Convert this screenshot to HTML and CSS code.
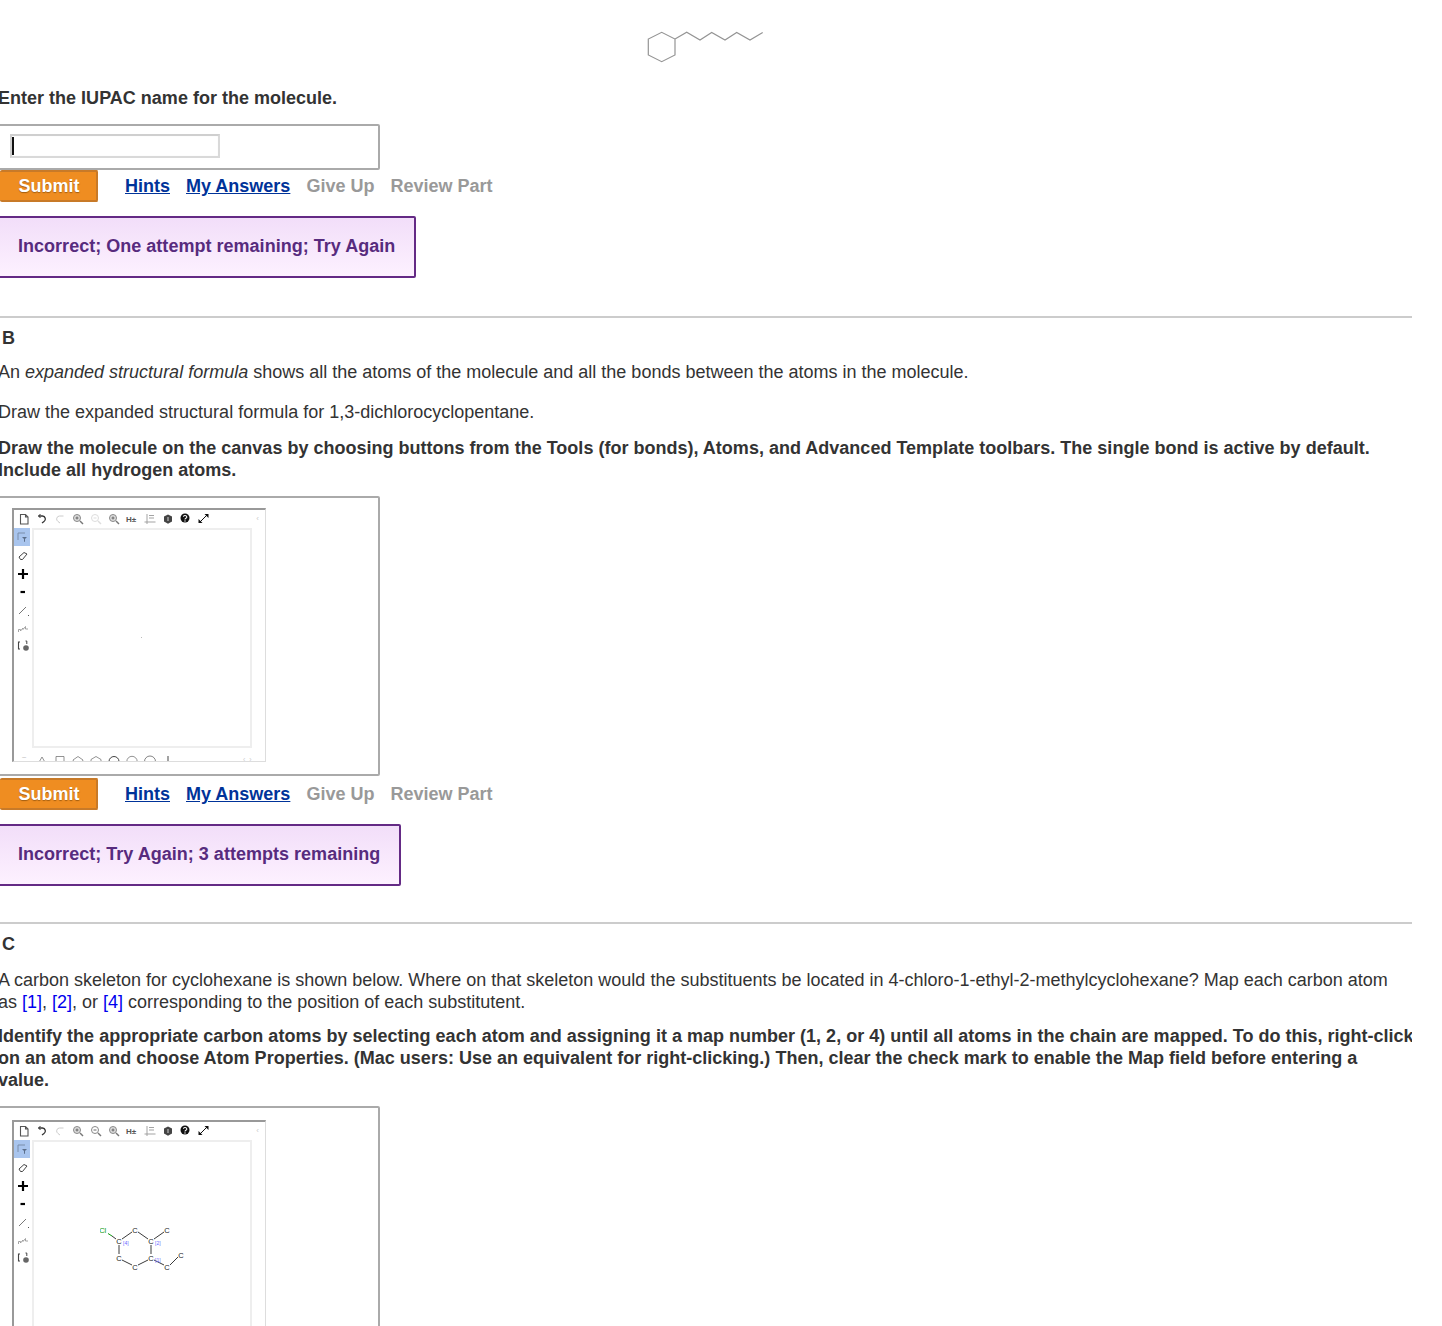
FILE: index.html
```html
<!DOCTYPE html>
<html lang="en">
<head>
<meta charset="utf-8">
<title>Naming molecules</title>
<link rel="stylesheet" href="styles.css">
</head>
<body>
<svg class="sprite" width="0" height="0" aria-hidden="true">
  <symbol id="i-new" viewBox="0 0 14 14"><path d="M3.500 2.500h5l2.500 2.500v7h-7.500z M8.500 2.500v2.500h2.500" fill="none" stroke="#555" stroke-width="1.100"/></symbol>
  <symbol id="i-undo" viewBox="0 0 14 14"><path d="M3.500 4h4a3 3 0 0 1 1.500 5.500l-2 1.500" fill="none" stroke="#333" stroke-width="1.300"/><path d="M5.500 2 3.500 4l2 2" fill="none" stroke="#333" stroke-width="1"/></symbol>
  <symbol id="i-redo" viewBox="0 0 14 14"><path d="M10.500 4H6.500a3 3 0 0 0-1.500 5.500l2 1.500" fill="none" stroke="#ccc" stroke-width="1"/></symbol>
  <symbol id="i-zin" viewBox="0 0 14 14"><circle cx="6" cy="6" r="3.500" fill="#ddd" stroke="#888"/><path d="M4.500 6h3M6 4.500v3" stroke="#666"/><path d="m9 9 3 3" stroke="#777" stroke-width="1.400"/></symbol>
  <symbol id="i-zout" viewBox="0 0 14 14"><circle cx="6" cy="6" r="3.500" fill="#fff" stroke="#888"/><path d="M4.500 6h3" stroke="#666"/><path d="m9 9 3 3" stroke="#777" stroke-width="1.400"/></symbol>
  <symbol id="i-zout-off" viewBox="0 0 14 14"><circle cx="6" cy="6" r="3.500" fill="#fff" stroke="#ddd"/><path d="M4.500 6h3" stroke="#ddd"/><path d="m9 9 3 3" stroke="#ddd" stroke-width="1.400"/></symbol>
  <symbol id="i-hs" viewBox="0 0 14 14"><text x="1" y="9.500" class="hs-text">H±</text></symbol>
  <symbol id="i-2d" viewBox="0 0 14 14"><path d="M4 2v10M1.500 10h11M6 3.500h5M6 6h5" stroke="#999" fill="none" stroke-width=".9"/></symbol>
  <symbol id="i-info" viewBox="0 0 14 14"><path d="M7 2.500 11 4.500v5l-4 2.200-4-2.200v-5z" fill="#444"/><path d="M7 5v4" stroke="#bbb" stroke-width="1.200"/></symbol>
  <symbol id="i-help" viewBox="0 0 14 14"><circle cx="6" cy="6" r="4.500" fill="#111"/><path d="M4.400 4.800a1.700 1.500 0 1 1 2.400 1.500c-.6.300-.8.600-.8 1.200" fill="none" stroke="#fff" stroke-width="1.100"/><circle cx="6" cy="9" r=".7" fill="#fff"/></symbol>
  <symbol id="i-expand" viewBox="0 0 14 14"><path d="m3 10 7-7" stroke="#111"/><path d="M7.500 2h4v4zM1.500 7v4h4z" fill="#111"/></symbol>
  <symbol id="i-select" viewBox="0 0 14 14"><path d="M3 10V3h7" fill="none" stroke="#7b8eaa" stroke-width="1"/><path d="M7 7h5l-2 2v2.500l-1 .500V9z" fill="#5c6f8a"/></symbol>
  <symbol id="i-erase" viewBox="0 0 14 14"><path d="m3 8 5-4.500 3 1.500-4.500 5.500H4.500z" fill="#fff" stroke="#444"/></symbol>
  <symbol id="i-plus" viewBox="0 0 14 14"><path d="M7 2v10M2 7h10" stroke="#000" stroke-width="2.200"/></symbol>
  <symbol id="i-minus" viewBox="0 0 14 14"><path d="M4.500 7h4.500" stroke="#000" stroke-width="2.200"/></symbol>
  <symbol id="i-bond" viewBox="0 0 14 14"><path d="m3 11 7-7" stroke="#777"/><path d="M12 12h1v1h-1z" fill="#555"/></symbol>
  <symbol id="i-chain" viewBox="0 0 14 14"><path d="M2.500 11V8.500h2V10l2.500-3v1.500L9.500 5.500V8H12" stroke="#999" fill="none" stroke-width=".9"/></symbol>
  <symbol id="i-bracket" viewBox="0 0 14 14"><path d="M4 3H2.500v7H4" fill="none" stroke="#444" stroke-width="1.100"/><path d="M9.500 2h1.300v3" fill="none" stroke="#444"/><circle cx="10" cy="9" r="2.800" fill="#666"/></symbol>
  <symbol id="r-3" viewBox="0 0 14 14"><path d="M7 3 11 10H3z" fill="none" stroke="#777" stroke-width=".8"/></symbol>
  <symbol id="r-4" viewBox="0 0 14 14"><path d="M3 2.500h8v8H3z" fill="none" stroke="#777" stroke-width=".8"/></symbol>
  <symbol id="r-5" viewBox="0 0 14 14"><path d="M7 2.500 12 6l-2 5H4L2 6z" fill="none" stroke="#777" stroke-width=".8"/></symbol>
  <symbol id="r-6" viewBox="0 0 14 14"><path d="M7 2.500l5 3v5l-5 3-5-3v-5z" fill="none" stroke="#777" stroke-width=".8"/></symbol>
  <symbol id="r-7" viewBox="0 0 14 14"><circle cx="7" cy="7.500" r="5" fill="none" stroke="#444" stroke-width="1"/></symbol>
  <symbol id="r-8" viewBox="0 0 14 14"><circle cx="7" cy="7.500" r="5.200" fill="none" stroke="#777" stroke-width=".8"/></symbol>
  <symbol id="r-9" viewBox="0 0 14 14"><circle cx="7" cy="7.500" r="5.500" fill="none" stroke="#666" stroke-width=".8"/></symbol>
  <symbol id="r-t" viewBox="0 0 14 14"><path d="M7 2v8M4 10h6" stroke="#666" stroke-width="1.200"/></symbol>
</svg>

<main class="page">
  <div class="figure">
    <svg class="skeletal" width="120" height="36" viewBox="0 0 120 36" aria-hidden="true">
      <path d="M29 9 40.700 2.300 54 10 65.700 2.500 79 10 90.700 2.500 104 10 116.700 2.500M29 9V25L15.700 31.700 2.300 25V9L15.700 2.300z" fill="none" stroke="#949494" stroke-width="1.200"/>
    </svg>
  </div>

  <p class="para bold prompt">Enter the IUPAC name for the molecule.</p>
  <div class="answer answer-text">
    <div class="input"><span class="caret"></span></div>
  </div>
  <div class="actions">
    <button class="submit" type="button">Submit</button>
    <nav class="links">
      <a class="link" href="#">Hints</a>
      <a class="link" href="#">My Answers</a>
      <span class="off">Give Up</span>
      <span class="off">Review Part</span>
    </nav>
  </div>
  <div class="feedback">Incorrect; One attempt remaining; Try Again</div>

  <hr class="rule">
  <section class="part">
    <h2 class="part-title">B</h2>
    <p class="para first">An <em>expanded structural formula</em> shows all the atoms of the molecule and all the bonds between the atoms in the molecule.</p>
    <p class="para second">Draw the expanded structural formula for 1,3-dichlorocyclopentane.</p>
    <p class="para bold third">Draw the molecule on the canvas by choosing buttons from the Tools (for bonds), Atoms, and Advanced Template toolbars. The single bond is active by default.<br>Include all hydrogen atoms.</p>
    <div class="answer answer-draw">
      <div class="editor">
        <div class="toolbar-top">
          <svg class="ti"><use href="#i-new"/></svg><svg class="ti"><use href="#i-undo"/></svg><svg class="ti"><use href="#i-redo"/></svg><svg class="ti"><use href="#i-zin"/></svg><svg class="ti"><use href="#i-zout-off"/></svg><svg class="ti"><use href="#i-zin"/></svg><svg class="ti"><use href="#i-hs"/></svg><svg class="ti"><use href="#i-2d"/></svg><svg class="ti"><use href="#i-info"/></svg><svg class="ti"><use href="#i-help"/></svg><svg class="ti"><use href="#i-expand"/></svg>
          <span class="chev">‹</span>
        </div>
        <div class="editor-mid">
          <div class="toolbar-left">
            <span class="ti-wrap active"><svg class="ti"><use href="#i-select"/></svg></span><svg class="ti"><use href="#i-erase"/></svg><svg class="ti"><use href="#i-plus"/></svg><svg class="ti"><use href="#i-minus"/></svg><svg class="ti"><use href="#i-bond"/></svg><svg class="ti"><use href="#i-chain"/></svg><svg class="ti"><use href="#i-bracket"/></svg>
          </div>
          <div class="canvas"><span class="origin"></span></div>
        </div>
        <div class="toolbar-bottom">
          <span class="tilde">~</span>
          <svg class="ti"><use href="#r-3"/></svg><svg class="ti"><use href="#r-4"/></svg><svg class="ti"><use href="#r-5"/></svg><svg class="ti"><use href="#r-6"/></svg><svg class="ti"><use href="#r-7"/></svg><svg class="ti"><use href="#r-8"/></svg><svg class="ti"><use href="#r-9"/></svg><svg class="ti"><use href="#r-t"/></svg>
          <span class="tail">‹ ›</span>
        </div>
      </div>
    </div>
    <div class="actions actions-draw">
      <button class="submit" type="button">Submit</button>
      <nav class="links">
        <a class="link" href="#">Hints</a>
        <a class="link" href="#">My Answers</a>
        <span class="off">Give Up</span>
        <span class="off">Review Part</span>
      </nav>
    </div>
    <div class="feedback">Incorrect; Try Again; 3 attempts remaining</div>
  </section>

  <hr class="rule rule-c">
  <section class="part">
    <h2 class="part-title">C</h2>
    <p class="para first first-c">A carbon skeleton for cyclohexane is shown below. Where on that skeleton would the substituents be located in 4-chloro-1-ethyl-2-methylcyclohexane? Map each carbon atom<br>as <span class="map">[1]</span>, <span class="map">[2]</span>, or <span class="map">[4]</span> corresponding to the position of each substitutent.</p>
    <p class="para bold third-c">Identify the appropriate carbon atoms by selecting each atom and assigning it a map number (1, 2, or 4) until all atoms in the chain are mapped. To do this, right-click<br>on an atom and choose Atom Properties. (Mac users: Use an equivalent for right-clicking.) Then, clear the check mark to enable the Map field before entering a<br>value.</p>
    <div class="answer answer-draw answer-c">
      <div class="editor">
        <div class="toolbar-top">
          <svg class="ti"><use href="#i-new"/></svg><svg class="ti"><use href="#i-undo"/></svg><svg class="ti"><use href="#i-redo"/></svg><svg class="ti"><use href="#i-zin"/></svg><svg class="ti"><use href="#i-zout"/></svg><svg class="ti"><use href="#i-zin"/></svg><svg class="ti"><use href="#i-hs"/></svg><svg class="ti"><use href="#i-2d"/></svg><svg class="ti"><use href="#i-info"/></svg><svg class="ti"><use href="#i-help"/></svg><svg class="ti"><use href="#i-expand"/></svg>
          <span class="chev">‹</span>
        </div>
        <div class="editor-mid">
          <div class="toolbar-left">
            <span class="ti-wrap active"><svg class="ti"><use href="#i-select"/></svg></span><svg class="ti"><use href="#i-erase"/></svg><svg class="ti"><use href="#i-plus"/></svg><svg class="ti"><use href="#i-minus"/></svg><svg class="ti"><use href="#i-bond"/></svg><svg class="ti"><use href="#i-chain"/></svg><svg class="ti"><use href="#i-bracket"/></svg>
          </div>
          <div class="canvas">
            <svg class="mol" width="100" height="60" viewBox="0 0 100 60" aria-hidden="true">
              <path d="M12 11 16 14M22 14 32 7M38 7 48 14M54 14 64 7M19 20V29M51 20V29M22 35 32 40M38 40 48 35M54 35 64 40M70 40 78 32" fill="none" stroke="#3a3a3a" stroke-width="1"/>
              <path d="M8 8.500 12 11" fill="none" stroke="#0a9a0a" stroke-width="1"/>
              <text class="atom cl" x="2.700" y="7.500">Cl</text>
              <text class="atom" x="35" y="7.500">C</text>
              <text class="atom" x="67" y="7.500">C</text>
              <text class="atom" x="19" y="18.500">C</text>
              <text class="atom" x="51" y="18.500">C</text>
              <text class="atom" x="19" y="35.500">C</text>
              <text class="atom" x="51" y="35.500">C</text>
              <text class="atom" x="35" y="44.500">C</text>
              <text class="atom" x="67" y="44.500">C</text>
              <text class="atom" x="81" y="32.500">C</text>
              <text class="mapno" x="23" y="19.500">[4]</text>
              <text class="mapno" x="55" y="19.500">[2]</text>
              <text class="mapno" x="55" y="36.500">[1]</text>
            </svg>
          </div>
        </div>
      </div>
    </div>
  </section>
</main>
</body>
</html>
```
FILE: styles.css
```css
html, body {
  margin: 0;
  padding: 0;
  background: #fff;
}
body {
  font-family: "Liberation Sans", Arial, sans-serif;
  font-size: 18px;
  line-height: 22px;
  color: #333;
}
.sprite { position: absolute; }
.hs-text { font: bold 8px "Liberation Sans", sans-serif; fill: #555; }

.page {
  box-sizing: border-box;
  width: 1412px;
  height: 1326px;
  overflow: hidden;
  padding-top: 30px;
}
.figure {
  display: flex;
  justify-content: center;
  height: 36px;
}

.para { margin: 0 -6px 0 -2px; }
.bold { font-weight: bold; letter-spacing: .01px; }
.prompt { margin-top: 21px; }
.first { margin-top: 12px; }
.first-c { margin-top: 14px; }
.second { margin-top: 18px; }
.third { margin-top: 14px; }
.third-c { margin-top: 12px; }

.answer {
  box-sizing: border-box;
  width: 382px;
  margin-left: -2px;
  border: 2px solid #aaa;
  border-radius: 2px;
}
.answer-text {
  height: 46px;
  margin-top: 15px;
  padding: 8px 0 0 10px;
}
.input {
  box-sizing: border-box;
  display: flex;
  align-items: center;
  width: 210px;
  height: 24px;
  border: 2px solid #d9d9d9;
  border-top-color: #cfcfcf;
  border-left-color: #cfcfcf;
  box-shadow: inset 0 0 1px #e4e4e4;
  background: #fff;
}
.caret { width: 2px; height: 18px; background: #111; }

.actions {
  display: flex;
  align-items: center;
  gap: 27px;
  height: 32px;
}
.actions-draw { margin-top: 2px; }
.submit {
  box-sizing: border-box;
  width: 98px;
  height: 32px;
  padding: 0 0 0 2px;
  border: 2px solid #c87a28;
  border-left: 0;
  border-radius: 2px;
  background: #ef8d21;
  color: #fff;
  font: bold 18px "Liberation Sans", Arial, sans-serif;
  text-shadow: 0 1px 1px rgba(90, 50, 0, .5);
}
.links {
  display: flex;
  gap: 16px;
  font-weight: bold;
}
.link { color: #003399; text-decoration: underline; }
.off { color: #999; }

.feedback {
  box-sizing: border-box;
  width: max-content;
  margin-top: 14px;
  margin-left: -2px;
  padding: 17px 18.6px 19px 18px;
  border: 2px solid #642a85;
  border-radius: 2px;
  background: linear-gradient(#f2def9, #fdf1ff);
  color: #572b7e;
  font-weight: bold;
  letter-spacing: .02px;
}

.rule {
  height: 2px;
  margin: 38px 0 0;
  border: 0;
  background: #ccc;
}
.rule-c { margin-top: 36px; }
.part-title {
  margin: 9px 0 0 2px;
  font-size: 18px;
  line-height: 22px;
  font-weight: bold;
}
.map { color: #0000ee; }

.answer-draw {
  height: 280px;
  margin-top: 15px;
  padding: 10px 0 0 12px;
}
.answer-c {
  padding-top: 12px;
  height: 300px;
}
.editor {
  box-sizing: border-box;
  display: flex;
  flex-direction: column;
  width: 254px;
  height: 254px;
  overflow: hidden;
  border: 2px solid #999;
  border-right: 1px solid #ddd;
  border-bottom: 1px solid #ddd;
}
.answer-c .editor { height: 400px; border-bottom: 0; }
.ti { display: block; width: 14px; height: 14px; flex: none; }
.toolbar-top {
  position: relative;
  display: flex;
  align-items: center;
  gap: 4px;
  height: 18px;
  padding-left: 3px;
  flex: none;
}
.chev {
  position: absolute;
  right: 6px;
  top: 1px;
  font-size: 8px;
  line-height: 16px;
  color: #ccc;
}
.editor-mid {
  display: flex;
  height: 220px;
  flex: none;
}
.toolbar-left {
  display: flex;
  flex-direction: column;
  align-items: flex-start;
  gap: 4px;
  width: 18px;
  flex: none;
}
.toolbar-left > .ti { margin-left: 2px; }
.ti-wrap {
  display: flex;
  align-items: center;
  justify-content: center;
  width: 16px;
  height: 18px;
  margin-bottom: -1px;
}
.active { background: #a9c5ee; }
.canvas {
  position: relative;
  box-sizing: border-box;
  width: 220px;
  height: 220px;
  border: 2px solid #eee;
  background: #fff;
}
.origin {
  position: absolute;
  left: 107px;
  top: 107px;
  width: 1px;
  height: 1px;
  background: #bbb;
}
.mol {
  position: absolute;
  left: 66px;
  top: 83px;
}
.atom { font: 7.5px "Liberation Sans", sans-serif; fill: #222; text-anchor: middle; }
.cl { fill: #0a9a0a; }
.mapno { font: 5px "Liberation Sans", sans-serif; fill: #6a6aff; }
.toolbar-bottom {
  display: flex;
  align-items: flex-start;
  gap: 4px;
  height: 14px;
  padding: 6px 0 0 3px;
  flex: none;
}
.tilde {
  width: 14px;
  font-size: 8px;
  line-height: 8px;
  text-align: center;
  color: #bbb;
  flex: none;
}
.tail {
  margin-left: 64px;
  font-size: 7px;
  line-height: 12px;
  word-spacing: 2px;
  color: #ccc;
}
```
